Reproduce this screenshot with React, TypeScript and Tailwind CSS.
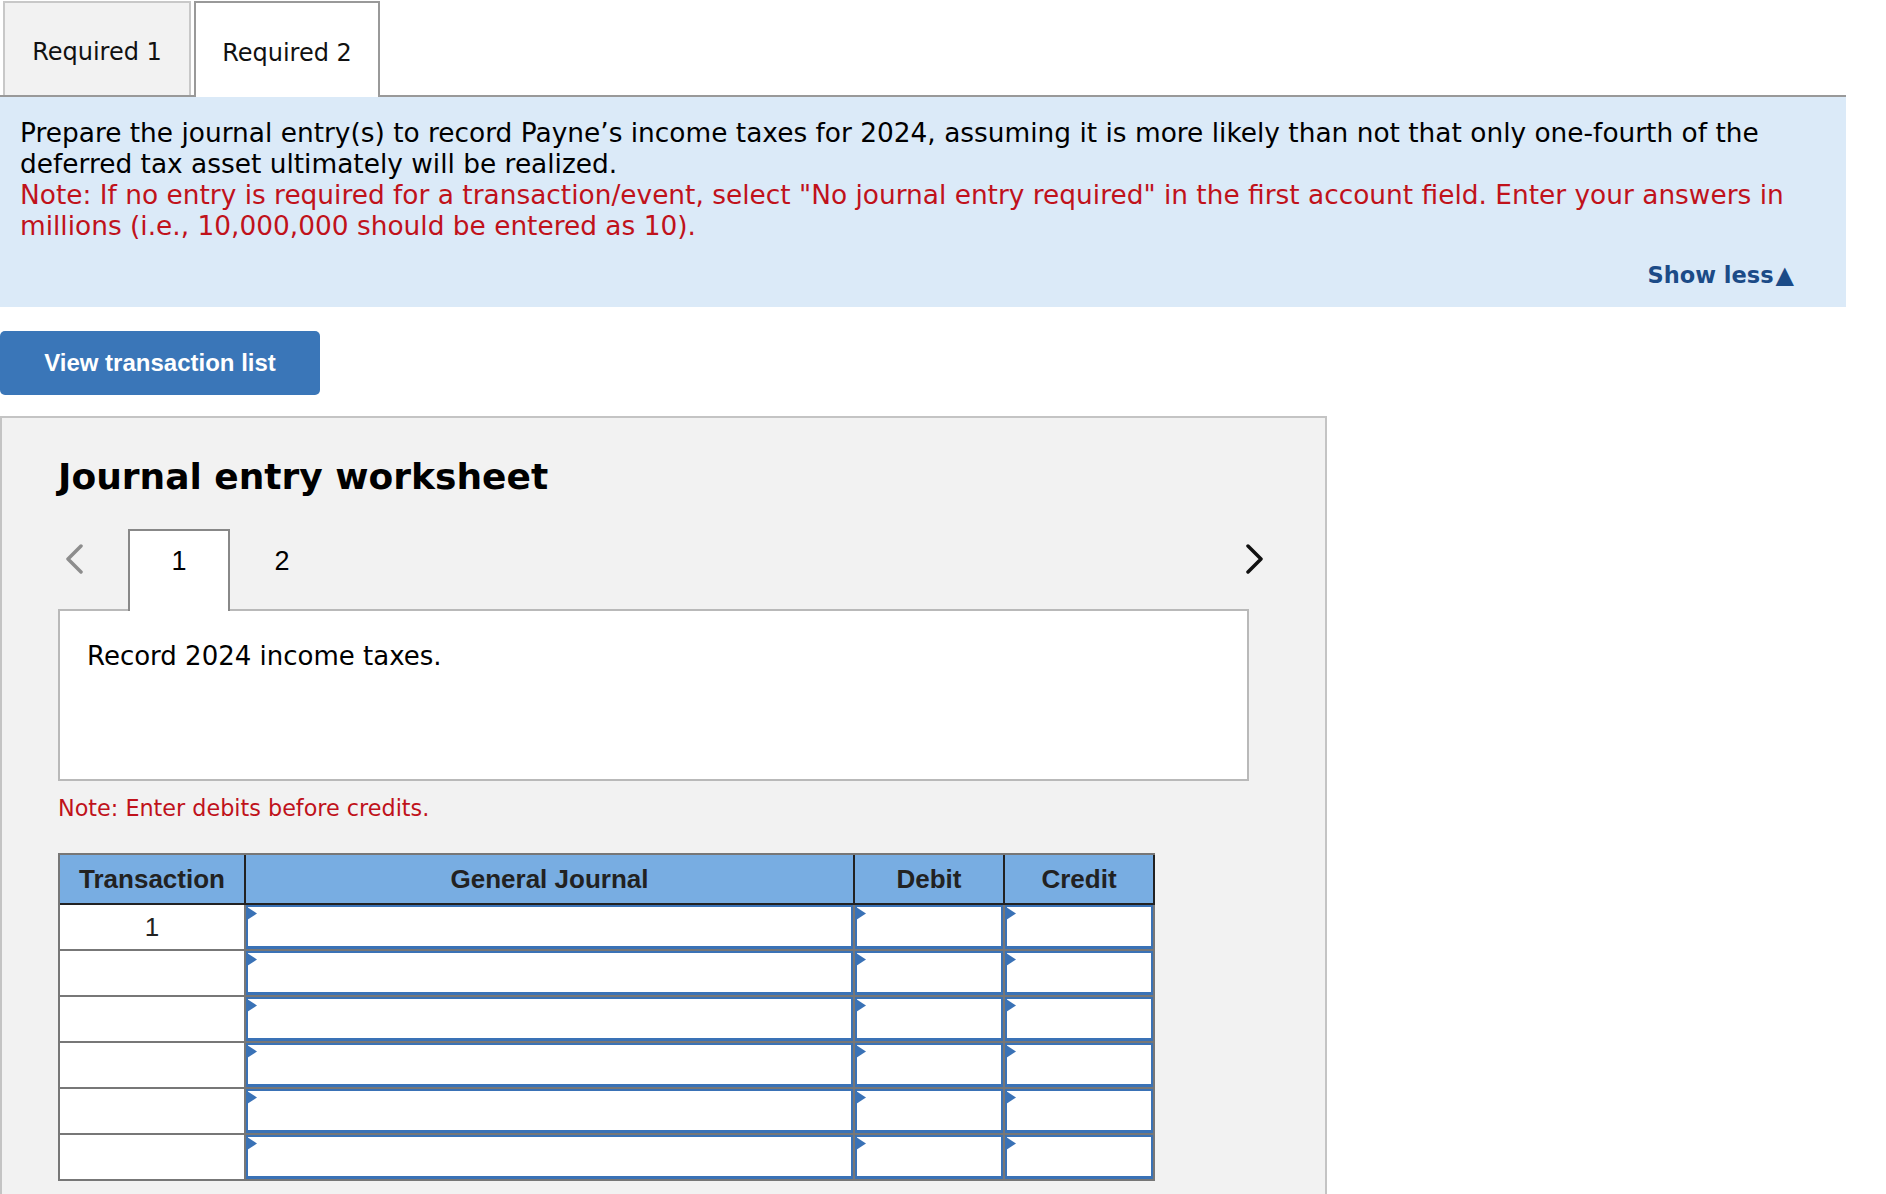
import React from 'react';

const Flag = () => (
  <svg width="10" height="13" viewBox="0 0 10 13" className="absolute -left-[1px] top-0">
    <polygon points="0,0 10,6.5 0,13" fill="#3a72b6" />
  </svg>
);

const InputCell = ({ width }: { width: string }) => (
  <div className={`${width} h-full border-r-2 border-[#777]`}>
    <div className="relative h-full bg-white border-2 border-b-[3px] border-[#3a72b6]">
      <Flag />
    </div>
  </div>
);

const rows = ['1', '', '', '', '', ''];

export default function App() {
  return (
    <div className="min-h-screen bg-white text-black [font-family:DejaVu_Sans,Verdana,sans-serif]">
      <div className="w-[1846px]">
        {/* question tabs */}
        <div className="flex items-end gap-[3px] pl-[3px] h-[97px] border-b-2 border-[#999]">
          <div className="w-[188px] h-[94px] pt-[5px] flex items-center justify-center bg-[#f2f2f2] border-2 border-b-0 border-[#c8c8c8] text-[24px] text-[#111]">
            Required 1
          </div>
          <div className="w-[186px] h-[96px] -mb-[2px] pt-[5px] flex items-center justify-center bg-white border-2 border-b-0 border-[#999] text-[24px] text-[#111]">
            Required 2
          </div>
        </div>

        {/* instructions */}
        <div className="bg-[#dbeaf8] px-[20px] pt-[20px] pb-[16px] text-[26.4px] leading-[31px]">
          <p>
            Prepare the journal entry(s) to record Payne’s income taxes for 2024, assuming it is more likely than not that only
            one-fourth of the deferred tax asset ultimately will be realized.
          </p>
          <p className="text-[#c0121b]">
            Note: If no entry is required for a transaction/event, select "No journal entry required" in the first account field.
            Enter your answers in millions (i.e., 10,000,000 should be entered as 10).
          </p>
          <div className="mt-[19px] pr-[32px] flex justify-end">
            <span className="text-[22.5px] font-bold text-[#1b4b87]">
              Show less<span className="ml-[2px] text-[24px]">▲</span>
            </span>
          </div>
        </div>
      </div>

      <button className="mt-[24px] w-[320px] h-[64px] rounded-[5px] bg-[#3a76b8] text-white font-bold text-[24px] [font-family:Liberation_Sans,Arial,sans-serif]">
        View transaction list
      </button>

      {/* worksheet */}
      <div className="mt-[21px] w-[1327px] bg-[#f2f2f2] border-2 border-b-0 border-[#c4c4c4] pl-[56px] pt-[40px] pb-[80px]">
        <h2 className="text-[36px] font-bold leading-[38px]">Journal entry worksheet</h2>

        <div className="mt-[33px] flex items-start h-[80px] w-[1208px] [font-family:Liberation_Sans,Arial,sans-serif]">
          <svg width="20" height="30" viewBox="0 0 20 30" className="mt-[15px] ml-[6px]">
            <polyline points="17,2 4,15 17,28" fill="none" stroke="#8d8d8d" strokeWidth="3.5" strokeLinecap="round" strokeLinejoin="round" />
          </svg>
          <div className="relative z-10 ml-[44px] w-[102px] h-[82px] bg-white border-2 border-b-0 border-[#888] flex justify-center pt-[12px] text-[27px] leading-[36px]">
            1
          </div>
          <div className="w-[104px] flex justify-center pt-[14px] text-[27px] leading-[36px]">2</div>
          <svg width="20" height="30" viewBox="0 0 20 30" className="mt-[15px] ml-auto mr-[1px]">
            <polyline points="3,2 16,15 3,28" fill="none" stroke="#111" strokeWidth="3.5" strokeLinecap="round" strokeLinejoin="round" />
          </svg>
        </div>

        <div className="w-[1191px] h-[172px] bg-white border-2 border-[#b9b9b9] px-[27px] pt-[30px] text-[26px] leading-[31px]">
          Record 2024 income taxes.
        </div>

        <p className="mt-[12px] text-[22.3px] leading-[31px] text-[#c0121b]">Note: Enter debits before credits.</p>

        <div className="mt-[29px] w-[1097px] border-l-2 border-t-2 border-[#777] [font-family:Liberation_Sans,Arial,sans-serif]">
          <div className="flex h-[50px] bg-[#78ade2] border-b-2 border-[#222] text-[26px] font-bold text-[#222]">
            <div className="w-[186px] flex items-center justify-center border-r-2 border-[#222]">Transaction</div>
            <div className="w-[609px] flex items-center justify-center border-r-2 border-[#222]">General Journal</div>
            <div className="w-[150px] flex items-center justify-center border-r-2 border-[#222]">Debit</div>
            <div className="w-[150px] flex items-center justify-center border-r-2 border-[#222]">Credit</div>
          </div>
          {rows.map((t, i) => (
            <div key={i} className="flex h-[46px] border-b-2 border-[#777]">
              <div className="w-[186px] h-full bg-white border-r-2 border-[#777] flex items-center justify-center text-[26px] text-[#222]">
                {t}
              </div>
              <InputCell width="w-[609px]" />
              <InputCell width="w-[150px]" />
              <InputCell width="w-[150px]" />
            </div>
          ))}
        </div>
      </div>
    </div>
  );
}
